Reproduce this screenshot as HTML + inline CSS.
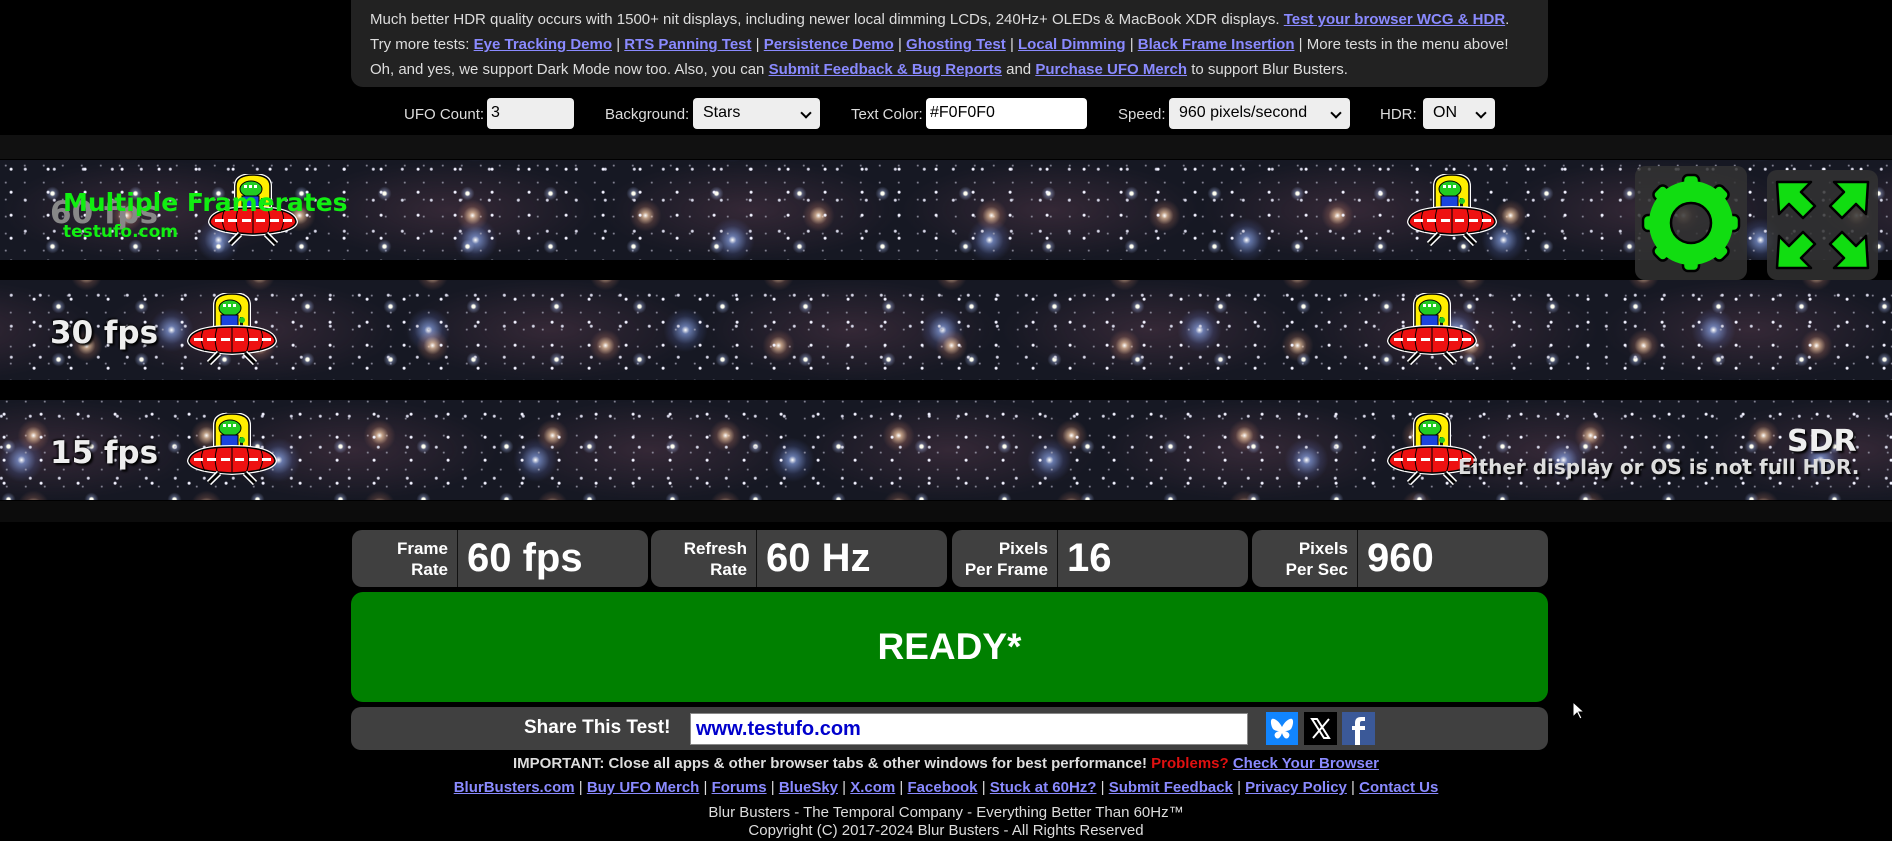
<!DOCTYPE html>
<html><head><meta charset="utf-8">
<style>
*{margin:0;padding:0;box-sizing:border-box}
body{width:1892px;height:841px;background:#000;font-family:"Liberation Sans",Arial,sans-serif;color:#f0f0f0;position:relative;overflow:hidden}
a{color:#8a8aff;font-weight:bold;text-decoration:underline}
.abs{position:absolute}
.info{left:351px;top:0;width:1197px;height:87px;background:#222;border-radius:0 0 12px 12px;font-size:15px;color:#ddd}
.info div{position:absolute;left:19px;white-space:nowrap}
.ctrl{top:98px;font-size:15px;color:#ddd;white-space:nowrap}
.box{background:#eee;border-radius:4px;height:31px;top:98px;color:#000;font-size:16px;padding:6px 4px}
.sel::after{content:"";position:absolute;right:10px;top:11px;width:6px;height:6px;border-right:2px solid #000;border-bottom:2px solid #000;transform:rotate(45deg)}
.band{left:0;width:1892px;background:#111}
.strip{left:0;width:1892px;height:100px;overflow:hidden;
background:
radial-gradient(circle at 30% 40%,#fff 0,#eef 1px,transparent 2px) 0 0/37px 23px,
radial-gradient(circle at 70% 20%,#dde 0,#ccd 1px,transparent 2px) 5px 3px/29px 31px,
radial-gradient(circle at 50% 50%,#fff 0,#ffe 1.5px,rgba(180,200,255,.35) 3px,transparent 7px) 11px 7px/83px 53px,
radial-gradient(circle at 50% 50%,#fff 0,rgba(255,210,170,.7) 3px,rgba(255,160,120,.18) 9px,transparent 16px) 40px 20px/173px 71px,
radial-gradient(circle at 20% 80%,#aab 0,transparent 1.5px) 2px 9px/19px 17px,
radial-gradient(circle at 50% 50%,#fff 0,rgba(150,180,255,.6) 4px,rgba(120,150,255,.15) 14px,transparent 22px) 90px 30px/257px 100px,
radial-gradient(ellipse at 50% 50%,rgba(110,70,90,.35),transparent 70%) 0 0/300px 100px,
#161823}
.fps{font-family:"DejaVu Sans",sans-serif;font-weight:bold;font-size:31px;color:#eee;text-shadow:2px 2px 2px #000,-1px -1px 2px #000}
.stat{top:530px;height:57px;width:296px;background:#404040;border-radius:10px}
.stat .l{position:absolute;left:0;top:8px;width:96px;text-align:right;font-weight:bold;font-size:17px;line-height:21px;color:#fff}
.stat .d{position:absolute;left:105px;top:0;width:1px;height:57px;background:#111}
.stat .v{position:absolute;left:115px;top:6px;font-weight:bold;font-size:40px;color:#fff}
.foot{left:0;width:1892px;text-align:center;white-space:nowrap}
</style></head><body>

<div class="abs info">
<div style="top:11px">Much better HDR quality occurs with 1500+ nit displays, including newer local dimming LCDs, 240Hz+ OLEDs &amp; MacBook XDR displays. <a>Test your browser WCG &amp; HDR</a>.</div>
<div style="top:36px">Try more tests: <a>Eye Tracking Demo</a> | <a>RTS Panning Test</a> | <a>Persistence Demo</a> | <a>Ghosting Test</a> | <a>Local Dimming</a> | <a>Black Frame Insertion</a> | More tests in the menu above!</div>
<div style="top:61px">Oh, and yes, we support Dark Mode now too. Also, you can <a>Submit Feedback &amp; Bug Reports</a> and <a>Purchase UFO Merch</a> to support Blur Busters.</div>
</div>

<div class="abs ctrl" style="left:404px;top:106px">UFO Count:</div>
<div class="abs box" style="left:487px;width:87px">3</div>
<div class="abs ctrl" style="left:605px;top:106px">Background:</div>
<div class="abs box sel" style="left:693px;width:127px;padding-left:10px">Stars</div>
<div class="abs ctrl" style="left:851px;top:106px">Text Color:</div>
<div class="abs box" style="left:926px;width:161px;background:#fff">#F0F0F0</div>
<div class="abs ctrl" style="left:1118px;top:106px">Speed:</div>
<div class="abs box sel" style="left:1169px;width:181px;padding-left:10px">960 pixels/second</div>
<div class="abs ctrl" style="left:1380px;top:106px">HDR:</div>
<div class="abs box sel" style="left:1423px;width:72px;padding-left:10px">ON</div>

<div class="abs band" style="top:135px;height:24px"></div>
<div class="abs band" style="top:501px;height:21px;background:#0c0c0c"></div>

<svg width="0" height="0" style="position:absolute">
<defs>
<g id="ufo">
<path d="M28 40 V12 Q28 1 45 1 Q62 1 62 12 V40 Z" fill="#ffee00" stroke="#fff" stroke-width="4"/>
<path d="M28 40 V12 Q28 1 45 1 Q62 1 62 12 V40 Z" fill="#ffee00" stroke="#000" stroke-width="1.5"/>
<ellipse cx="43" cy="15" rx="11" ry="8" fill="#22cc22" stroke="#000"/>
<rect x="36" y="11" width="3" height="3" fill="#fff"/><rect x="41" y="11" width="3" height="3" fill="#fff"/><rect x="46" y="11" width="3" height="3" fill="#fff"/>
<rect x="34" y="22" width="17" height="16" fill="#1a44dd" stroke="#000"/>
<rect x="53" y="24" width="3" height="14" fill="#111"/><circle cx="55" cy="27" r="3" fill="#22cc22"/>
<path d="M2 48 Q4 34 45 34 Q86 34 88 48 Q86 58 45 60 Q4 58 2 48Z" fill="#ee1111" stroke="#fff" stroke-width="4"/>
<path d="M2 48 Q4 34 45 34 Q86 34 88 48 Q86 58 45 60 Q4 58 2 48Z" fill="#ee1111" stroke="#000" stroke-width="1.5"/>
<path d="M16 37 Q12 48 18 58 M30 35 Q26 48 31 60 M45 34 V60 M60 35 Q64 48 59 60 M74 37 Q78 48 72 58" stroke="#000" fill="none"/>
<g fill="#fff"><rect x="7" y="45" width="9" height="3"/><rect x="20" y="45" width="9" height="3"/><rect x="34" y="45" width="9" height="3"/><rect x="48" y="45" width="9" height="3"/><rect x="62" y="45" width="9" height="3"/><rect x="75" y="45" width="9" height="3"/></g>
<path d="M32 60 L22 70 M58 60 L68 70" stroke="#fff" stroke-width="6"/>
<path d="M32 60 L22 70 M58 60 L68 70" stroke="#000" stroke-width="3"/>
</g>
<rect id="tooth" x="48" y="9" width="16" height="18" rx="5"/>
</defs></svg>

<div class="abs strip" style="top:160px"></div>
<div class="abs strip" style="top:280px;background-position:60px 10px,20px 40px,100px 0,0 30px,7px 2px,300px 0,100px 0,0 0"></div>
<div class="abs strip" style="top:400px;background-position:30px 5px,10px 10px,50px 20px,120px 0,3px 5px,150px 10px,200px 0,0 0"></div>

<div class="abs fps" style="left:50px;top:195px;color:#888;text-shadow:none">60 fps</div>
<div class="abs fps" style="left:50px;top:315px">30 fps</div>
<div class="abs fps" style="left:50px;top:435px">15 fps</div>

<svg class="abs" style="left:208px;top:174px" width="90" height="72"><use href="#ufo"/></svg>
<svg class="abs" style="left:187px;top:293px" width="90" height="72"><use href="#ufo"/></svg>
<svg class="abs" style="left:187px;top:413px" width="90" height="72"><use href="#ufo"/></svg>
<svg class="abs" style="left:1407px;top:174px" width="90" height="72"><use href="#ufo"/></svg>
<svg class="abs" style="left:1387px;top:293px" width="90" height="72"><use href="#ufo"/></svg>
<svg class="abs" style="left:1387px;top:413px" width="90" height="72"><use href="#ufo"/></svg>

<div class="abs" style="left:63px;top:188px;font-family:'DejaVu Sans',sans-serif;font-weight:bold;font-size:25px;color:#11ee11;white-space:nowrap">Multiple Framerates</div>
<div class="abs" style="left:63px;top:222px;font-family:'DejaVu Sans',sans-serif;font-weight:bold;font-size:17px;color:#11ee11">testufo.com</div>

<div class="abs" style="left:1635px;top:166px;width:112px;height:114px;background:rgba(50,50,50,.85);border-radius:10px">
<svg width="112" height="114" viewBox="0 0 112 114">
<g fill="#11dd11" stroke="#000" stroke-width="2.5">
<use href="#tooth"/><use href="#tooth" transform="rotate(45 56 57)"/><use href="#tooth" transform="rotate(90 56 57)"/><use href="#tooth" transform="rotate(135 56 57)"/><use href="#tooth" transform="rotate(180 56 57)"/><use href="#tooth" transform="rotate(225 56 57)"/><use href="#tooth" transform="rotate(270 56 57)"/><use href="#tooth" transform="rotate(315 56 57)"/>
</g>
<circle cx="56" cy="57" r="31" fill="none" stroke="#11dd11" stroke-width="22"/>
<circle cx="56" cy="57" r="20" fill="none" stroke="#000" stroke-width="2.5"/>
</svg></div>
<div class="abs" style="left:1767px;top:170px;width:111px;height:110px;background:rgba(50,50,50,.85);border-radius:10px">
<svg width="111" height="110" viewBox="0 0 111 110" fill="#11dd11" stroke="#000" stroke-width="2.5" stroke-linejoin="round">
<path d="M10 12 H44 L34 22 L48 36 L36 48 L22 34 L12 44Z"/>
<path d="M101 12 H67 L77 22 L63 36 L75 48 L89 34 L99 44Z"/>
<path d="M10 98 H44 L34 88 L48 74 L36 62 L22 76 L12 66Z"/>
<path d="M101 98 H67 L77 88 L63 74 L75 62 L89 76 L99 66Z"/>
</svg></div>

<div class="abs" style="left:1787px;top:424px;font-family:'DejaVu Sans',sans-serif;font-weight:bold;font-size:30px;color:#eee;text-shadow:2px 2px 2px #000">SDR</div>
<div class="abs" style="left:1458px;top:455px;font-family:'DejaVu Sans',sans-serif;font-weight:bold;font-size:20px;color:#ddd;text-shadow:2px 2px 2px #000;white-space:nowrap">Either display or OS is not full HDR.</div>

<div class="abs stat" style="left:352px"><div class="l">Frame<br>Rate</div><div class="d"></div><div class="v">60 fps</div></div>
<div class="abs stat" style="left:651px"><div class="l">Refresh<br>Rate</div><div class="d"></div><div class="v">60 Hz</div></div>
<div class="abs stat" style="left:952px"><div class="l">Pixels<br>Per Frame</div><div class="d"></div><div class="v">16</div></div>
<div class="abs stat" style="left:1252px"><div class="l">Pixels<br>Per Sec</div><div class="d"></div><div class="v">960</div></div>

<div class="abs" style="left:351px;top:592px;width:1197px;height:110px;background:#008000;border-radius:12px;text-align:center;line-height:110px;font-weight:bold;font-size:37px;color:#fff">READY*</div>

<div class="abs" style="left:351px;top:707px;width:1197px;height:43px;background:#404040;border-radius:10px"></div>
<div class="abs" style="left:524px;top:717px;font-weight:bold;font-size:19px;color:#fff">Share This Test!</div>
<div class="abs" style="left:690px;top:713px;width:558px;height:32px;background:#fff;border:1px solid #888;padding:4px 5px;font-weight:bold;font-size:20px;color:#00c">www.testufo.com</div>
<div class="abs" style="left:1266px;top:712px;width:32px;height:33px;background:#1185fe">
<svg width="32" height="33" viewBox="0 0 32 33"><path d="M16 15 C13 9 8 6 6 7 C4 8 5 14 7 17 C9 19 12 19 13 19 C9 20 7 23 10 26 C13 28 15 24 16 21 C17 24 19 28 22 26 C25 23 23 20 19 19 C20 19 23 19 25 17 C27 14 28 8 26 7 C24 6 19 9 16 15Z" fill="#fff"/></svg></div>
<div class="abs" style="left:1304px;top:712px;width:33px;height:33px;background:#000">
<svg width="33" height="33"><path d="M8 7 H13 L25 26 H20Z" fill="none" stroke="#fff" stroke-width="2"/><path d="M25 7 L9 26" stroke="#fff" stroke-width="2"/></svg></div>
<div class="abs" style="left:1342px;top:712px;width:33px;height:33px;background:#3b5998">
<svg width="33" height="33"><path d="M18 33 V18 H23 V14 H18 V11 Q18 9 20 9 H23 V5 H19 Q13 5 13 11 V14 H10 V18 H13 V33Z" fill="#fff"/></svg></div>

<div class="abs foot" style="top:755px;font-size:15px;font-weight:bold;color:#ddd">IMPORTANT: Close all apps &amp; other browser tabs &amp; other windows for best performance! <span style="color:#e01010">Problems?</span> <a>Check Your Browser</a></div>
<div class="abs foot" style="top:779px;font-size:15px;color:#ddd"><a>BlurBusters.com</a> | <a>Buy UFO Merch</a> | <a>Forums</a> | <a>BlueSky</a> | <a>X.com</a> | <a>Facebook</a> | <a>Stuck at 60Hz?</a> | <a>Submit Feedback</a> | <a>Privacy Policy</a> | <a>Contact Us</a></div>
<div class="abs foot" style="top:804px;font-size:15px;color:#ddd">Blur Busters - The Temporal Company - Everything Better Than 60Hz™</div>
<div class="abs foot" style="top:822px;font-size:15px;color:#ddd">Copyright (C) 2017-2024 Blur Busters - All Rights Reserved</div>

<svg class="abs" style="left:1572px;top:701px" width="12" height="19"><path d="M1 1 V16 L5 12 L8 18 L10 17 L7 11 H12Z" fill="#fff" stroke="#000"/></svg>
</body></html>
